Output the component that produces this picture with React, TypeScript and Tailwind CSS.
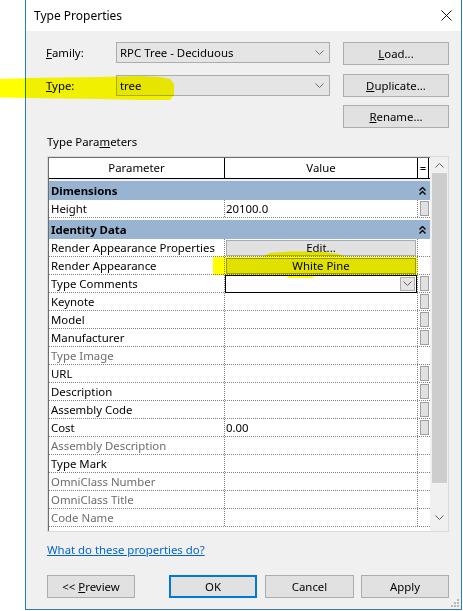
import React from "react";

type Row = {
  name: string;
  value?: string;
  kind?: "edit" | "pine" | "combo";
  btn?: boolean;
  dim?: boolean;
};

const identityRows: Row[] = [
  { name: "Render Appearance Properties", kind: "edit" },
  { name: "Render Appearance", kind: "pine" },
  { name: "Type Comments", kind: "combo", btn: true },
  { name: "Keynote", btn: true },
  { name: "Model", btn: true },
  { name: "Manufacturer", btn: true },
  { name: "Type Image", dim: true },
  { name: "URL", btn: true },
  { name: "Description", btn: true },
  { name: "Assembly Code", btn: true },
  { name: "Cost", value: "0.00", btn: true },
  { name: "Assembly Description", dim: true },
  { name: "Type Mark" },
  { name: "OmniClass Number", dim: true },
  { name: "OmniClass Title", dim: true },
  { name: "Code Name", dim: true },
];

function Chevron({ up = false, className = "" }: { up?: boolean; className?: string }) {
  return (
    <svg width="9" height="5" viewBox="0 0 9 5" className={className}>
      <path
        d={up ? "M0.5 4.5 L4.5 0.5 L8.5 4.5" : "M0.5 0.5 L4.5 4.5 L8.5 0.5"}
        fill="none"
        stroke="currentColor"
        strokeWidth="1"
      />
    </svg>
  );
}

function DoubleUp() {
  return (
    <svg width="7" height="8" viewBox="0 0 7 8" className="text-black">
      <path d="M0.5 3.5 L3.5 0.5 L6.5 3.5 M0.5 7.5 L3.5 4.5 L6.5 7.5" fill="none" stroke="currentColor" strokeWidth="1.4" />
    </svg>
  );
}

function Combo({ value }: { value: string }) {
  return (
    <div className="flex h-[21px] w-[214px] items-center justify-between border border-[#acacac] bg-[#e5e5e5] pl-[3px] pr-[5px]">
      <span>{value}</span>
      <Chevron className="text-[#707070]" />
    </div>
  );
}

function DlgButton({ children, className = "" }: { children: React.ReactNode; className?: string }) {
  return (
    <div
      className={`flex h-[23px] w-[106px] items-center justify-center border border-[#adadad] bg-[#e1e1e1] ${className}`}
    >
      {children}
    </div>
  );
}

function SmallBtn() {
  return <div className="h-[15px] w-[9px] border border-[#a0a0a0] bg-[#e1e1e1]" />;
}

function DataRow({ row }: { row: Row }) {
  return (
    <div className="flex h-[18px] border-b border-dotted border-[#808080]">
      <div
        className={`flex w-[176px] items-center border-r border-dotted border-[#808080] pl-[2px] ${
          row.dim ? "text-[#6d6d6d]" : "text-black"
        }`}
      >
        {row.name}
      </div>
      <div className="flex w-[193px] items-center border-r border-dotted border-[#808080]">
        {row.kind === "edit" && (
          <div className="mx-[1px] flex h-[16px] flex-1 items-center justify-center border border-[#acacac] bg-[#e1e1e1]">
            Edit...
          </div>
        )}
        {row.kind === "pine" && (
          <div className="mx-[1px] flex h-[16px] flex-1 items-center justify-center border border-[#9a9a9a] bg-[#e1e1e1]">
            White Pine
          </div>
        )}
        {row.kind === "combo" && (
          <div className="flex h-[18px] flex-1 items-center justify-end border border-black bg-white pr-[1px]">
            <div className="flex h-[14px] w-[15px] items-center justify-center border border-[#acacac] bg-[#e5e5e5]">
              <Chevron className="text-[#606060]" />
            </div>
          </div>
        )}
        {row.value && <span className="pl-[1px]">{row.value}</span>}
      </div>
      <div className="flex flex-1 items-center justify-center">{row.btn && <SmallBtn />}</div>
    </div>
  );
}

function GroupRow({ label }: { label: string }) {
  return (
    <div className="flex h-[19px] items-center justify-between bg-[#99b4d1] pl-[2px] pr-[4px] font-bold">
      <span>{label}</span>
      <DoubleUp />
    </div>
  );
}

export default function App() {
  return (
    <div className="relative h-[611px] w-[463px] overflow-hidden bg-white font-['Noto_Sans',sans-serif] text-[11.4px] leading-[16px] text-black">
      <div className="ml-[25px] flex h-[610px] w-[437px] flex-col border-x border-b border-[#2b7bb9]">
        {/* title bar */}
        <div className="flex h-[31px] items-center justify-between bg-white pl-[8px] pr-[9px]">
          <span className="text-[12px]">Type Properties</span>
          <svg width="11" height="11" viewBox="0 0 11 11">
            <path d="M0.5 0.5 L10.5 10.5 M10.5 0.5 L0.5 10.5" stroke="#111" strokeWidth="1" />
          </svg>
        </div>

        <div className="flex flex-1 flex-col bg-[#f0f0f0]">
          {/* family / type */}
          <div className="mt-[11px] flex">
            <div className="ml-[20px] flex flex-col">
              <div className="flex items-center">
                <span className="w-[70px]">
                  <u>F</u>amily:
                </span>
                <Combo value="RPC Tree - Deciduous" />
              </div>
              <div className="mt-[12px] flex items-center">
                <span className="w-[70px]">
                  <u>T</u>ype:
                </span>
                <Combo value="tree" />
              </div>
            </div>
            <div className="ml-[13px] flex flex-col">
              <DlgButton>
                <span>
                  <u>L</u>oad...
                </span>
              </DlgButton>
              <DlgButton className="mt-[9px]">
                <span>
                  <u>D</u>uplicate...
                </span>
              </DlgButton>
              <DlgButton className="mt-[8px]">
                <span>
                  <u>R</u>ename...
                </span>
              </DlgButton>
            </div>
          </div>

          <div className="ml-[21px] mt-[6px] h-[16px]">
            Type Para<u>m</u>eters
          </div>

          {/* parameter table */}
          <div className="ml-[21px] mt-[6px] flex h-[376px] w-[402px] border border-[#dadada] bg-[#f0f0f0]">
            <div className="flex w-[382px] flex-col border-l border-t border-[#6d6d6d] bg-white">
              <div className="flex h-[21px] border-b border-black">
                <div className="flex w-[176px] items-center justify-center border-r border-black">Parameter</div>
                <div className="flex w-[193px] items-center justify-center border-r border-black">Value</div>
                <div className="flex w-[11px] items-center justify-center border-r border-black">=</div>
              </div>
              <div className="h-[2px] bg-[#f0f0f0]" />
              <GroupRow label="Dimensions" />
              <div className="flex h-[18px] border-b border-dotted border-[#808080]">
                <div className="flex w-[176px] items-center border-r border-dotted border-[#808080] pl-[2px]">Height</div>
                <div className="flex w-[193px] items-center border-r border-dotted border-[#808080] pl-[1px]">20100.0</div>
                <div className="flex flex-1 items-center justify-center">
                  <SmallBtn />
                </div>
              </div>
              <div className="h-[2px] bg-white" />
              <GroupRow label="Identity Data" />
              {identityRows.map((r) => (
                <DataRow key={r.name} row={r} />
              ))}
            </div>
            {/* scrollbar */}
            <div className="flex w-[18px] flex-col items-center bg-[#f0f0f0] pl-[1px]">
              <div className="flex h-[16px] items-center">
                <Chevron up className="text-[#606060]" />
              </div>
              <div className="h-[310px] w-[15px] bg-[#cdcdcd]" />
              <div className="flex-1" />
              <div className="mb-[6px] flex h-[16px] items-center">
                <Chevron className="text-[#606060]" />
              </div>
            </div>
          </div>

          <div className="ml-[21px] mt-[10px] h-[16px] text-[#0066cc] underline">What do these properties do?</div>

          <div className="ml-[21px] mt-[17px] flex">
            <div className="flex h-[23px] w-[88px] items-center justify-center border border-[#adadad] bg-[#e1e1e1]">
              <span>
                &lt;&lt; <u>P</u>review
              </span>
            </div>
            <div className="ml-[34px] flex h-[23px] w-[88px] items-center justify-center border-2 border-[#0078d7] bg-[#e1e1e1]">
              OK
            </div>
            <div className="ml-[8px] flex h-[23px] w-[89px] items-center justify-center border border-[#adadad] bg-[#e1e1e1]">
              Cancel
            </div>
            <div className="ml-[7px] flex h-[23px] w-[88px] items-center justify-center border border-[#adadad] bg-[#e1e1e1]">
              Apply
            </div>
          </div>
          <div className="flex flex-1 items-end justify-end pb-[2px] pr-[2px]">
            <svg width="8" height="8" viewBox="0 0 8 8">
              <rect x="6" y="0" width="2" height="2" fill="#b8b8b8" />
              <rect x="3" y="3" width="2" height="2" fill="#b8b8b8" />
              <rect x="6" y="3" width="2" height="2" fill="#b8b8b8" />
              <rect x="0" y="6" width="2" height="2" fill="#b8b8b8" />
              <rect x="3" y="6" width="2" height="2" fill="#b8b8b8" />
              <rect x="6" y="6" width="2" height="2" fill="#b8b8b8" />
            </svg>
          </div>
        </div>
      </div>

      {/* highlighter strokes */}
      <svg
        className="pointer-events-none absolute left-0 top-0 mix-blend-multiply"
        width="463"
        height="611"
        viewBox="0 0 463 611"
      >
        <path
          d="M0 79 L30 78 L60 77.5 L100 77 L140 76 L160 77 L170 79 L174 84 L174 95 L170 100 L140 100 L100 99 L60 98.5 L30 98 L0 97.5 Z"
          fill="#ffff00"
        />
        <path
          d="M213 257 L262 257 L270 253 L290 251.5 L320 251.5 L338 254 L345 257 L417 257 L417 275 L315 275 L312 278 L288 278 L285 275 L213 275 Z"
          fill="#ffff00"
        />
      </svg>
    </div>
  );
}
